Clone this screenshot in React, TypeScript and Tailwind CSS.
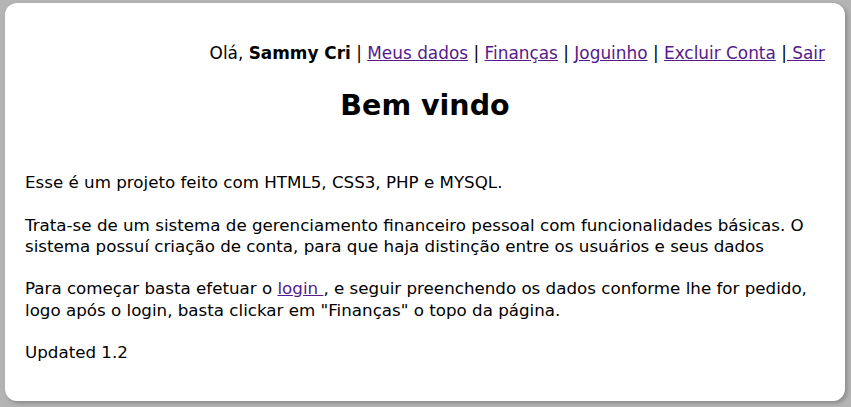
import React from "react";

export default function App() {
  return (
    <div className="w-[851px] h-[407px] bg-[#b4b4b4] pt-[3px] pl-[5px] pr-[6px] pb-[6px]" style={{ fontFamily: '"DejaVu Sans", Verdana, sans-serif' }}>
      <div className="h-full w-full bg-white rounded-[12px] shadow-[2px_2px_4px_rgba(0,0,0,0.25)] px-[20px] text-black text-[16.7px] leading-[21px]">
        <div className="pt-[40px] text-right text-[16.9px]">
          Olá, <b>Sammy Cri</b> | <a href="#" className="text-[#551a8b] underline">Meus dados</a> | <a href="#" className="text-[#551a8b] underline">Finanças</a> | <a href="#" className="text-[#551a8b] underline">Joguinho</a> | <a href="#" className="text-[#551a8b] underline">Excluir Conta</a> |<a href="#" className="text-[#551a8b] underline"> Sair</a>
        </div>
        <h1 className="mt-[24px] text-center text-[28.5px] leading-[36px] font-bold">Bem vindo</h1>
        <p className="mt-[48px]">Esse é um projeto feito com HTML5, CSS3, PHP e MYSQL.</p>
        <p className="mt-[22px]">Trata-se de um sistema de gerenciamento financeiro pessoal com funcionalidades básicas. O sistema possuí criação de conta, para que haja distinção entre os usuários e seus dados</p>
        <p className="mt-[20px] leading-[22px]">Para começar basta efetuar o <a href="#" className="text-[#551a8b] underline">login </a>, e seguir preenchendo os dados conforme lhe for pedido, logo após o login, basta clickar em "Finanças" o topo da página.</p>
        <p className="mt-[21px]">Updated 1.2</p>
      </div>
    </div>
  );
}
